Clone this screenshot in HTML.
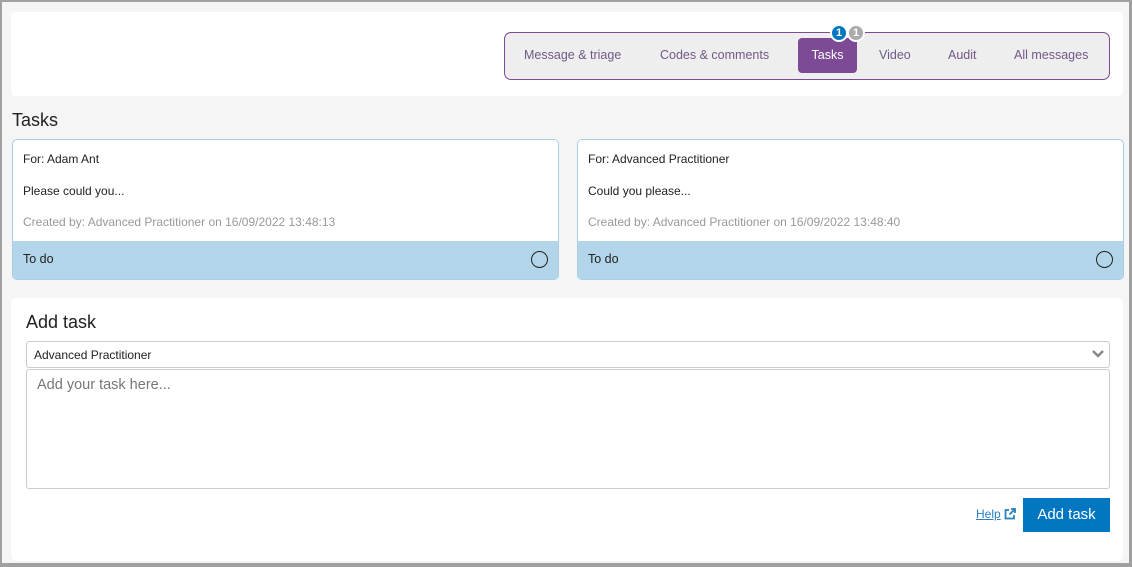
<!DOCTYPE html>
<html><head><style>
*{box-sizing:border-box;margin:0;padding:0}
body{width:1132px;height:567px;overflow:hidden;font-family:"Liberation Sans",sans-serif;background:#fff}
.frame{position:absolute;left:0;top:0;width:1132px;height:567px;border:2px solid #a0a0a0;border-right-width:3px;border-bottom-width:4px;background:#f5f5f5}
.top{position:absolute;left:11px;top:12px;width:1112px;height:84px;background:#fff;border-radius:4px}
.tabs{position:absolute;left:504px;top:32px;width:606px;height:48px;border:1px solid #7d4a96;border-radius:7px;background:#eeeeee}
.tab{position:absolute;top:22px;font-size:12.5px;color:#6f5a86}
.active{position:absolute;left:798px;top:38px;width:59px;height:35px;background:#7d4a96;border-radius:4px;color:#fff;font-size:12.5px;text-align:center;line-height:34px}
.badge{position:absolute;top:24px;width:18px;height:18px;border-radius:50%;border:2px solid #fff;color:#fff;font-size:11px;text-align:center;line-height:14px;font-weight:bold}
h2{position:absolute;font-weight:normal;font-size:18px;color:#222}
.card{position:absolute;top:139px;width:547px;height:141px;border:1px solid #a9cde6;border-radius:5px;background:#fff;overflow:hidden}
.card p{position:absolute;left:10px;font-size:12px;color:#222}
.card .g{color:#999}
.todo{position:absolute;left:0;right:0;bottom:0;height:38px;background:#b2d5ea;font-size:12.5px;color:#222;padding:11px 10px}
.circ{position:absolute;right:10px;top:10px;width:17px;height:17px;border:1.5px solid #222;border-radius:50%}
.bot{position:absolute;left:11px;top:298px;width:1112px;height:263px;background:#fff;border-radius:5px}
.sel{position:absolute;left:26px;top:341px;width:1084px;height:27px;border:1px solid #ccc;border-radius:3px;font-size:12px;color:#222;padding:6px 7px}
.ta{position:absolute;left:26px;top:369px;width:1084px;height:120px;border:1px solid #ccc;border-radius:3px;font-size:14.5px;color:#777;padding:7px 10px}
.btn{position:absolute;left:1023px;top:498px;width:87px;height:34px;background:#0077c0;color:#fff;font-size:15px;text-align:center;line-height:33px}
.help{position:absolute;left:976px;top:507px;font-size:12px;color:#2a7fc0;text-decoration:underline}
</style></head><body>
<div class="frame"></div>
<div class="top"></div>
<div class="tabs"></div>
<span class="tab" style="left:524px;top:48px">Message &amp; triage</span>
<span class="tab" style="left:660px;top:48px">Codes &amp; comments</span>
<div class="active">Tasks</div>
<span class="tab" style="left:879px;top:48px">Video</span>
<span class="tab" style="left:948px;top:48px">Audit</span>
<span class="tab" style="left:1014px;top:48px">All messages</span>
<div class="badge" style="left:847px;background:#aaa">1</div>
<div class="badge" style="left:830px;background:#0077c0">1</div>
<h2 style="left:12px;top:110px">Tasks</h2>
<div class="card" style="left:12px">
<p style="top:12px">For: Adam Ant</p>
<p style="top:44px">Please could you...</p>
<p class="g" style="top:75px">Created by: Advanced Practitioner on 16/09/2022 13:48:13</p>
<div class="todo">To do<div class="circ"></div></div></div>
<div class="card" style="left:577px">
<p style="top:12px">For: Advanced Practitioner</p>
<p style="top:44px">Could you please...</p>
<p class="g" style="top:75px">Created by: Advanced Practitioner on 16/09/2022 13:48:40</p>
<div class="todo">To do<div class="circ"></div></div></div>
<div class="bot"></div>
<h2 style="left:26px;top:312px">Add task</h2>
<div class="sel">Advanced Practitioner
<svg style="position:absolute;right:4px;top:7px" width="14" height="10" viewBox="0 0 14 10"><path d="M2 2l5 5 5-5" stroke="#888" stroke-width="2.5" fill="none"/></svg></div>
<div class="ta">Add your task here...</div>
<span class="help">Help</span>
<svg style="position:absolute;left:1004px;top:508px" width="12" height="12" viewBox="0 0 12 12"><path d="M5 2H1.5v8.5H10V7M7 1h4v4M11 1L5.5 6.5" stroke="#2a7fc0" stroke-width="1.8" fill="none"/></svg>
<div class="btn">Add task</div>
</body></html>
